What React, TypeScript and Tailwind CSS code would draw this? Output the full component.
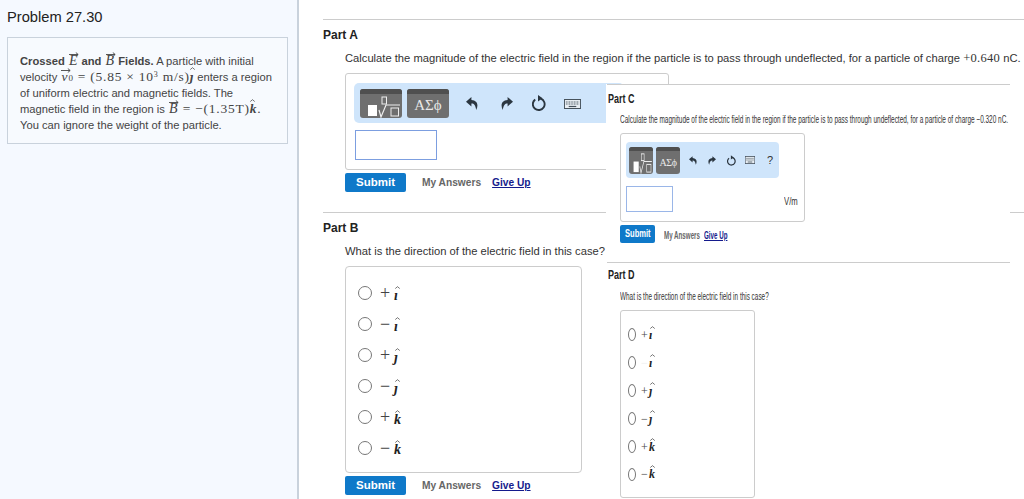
const SANS = { fontFamily: '"Liberation Sans", Arial, sans-serif' };

function UndoIcon({ className }: { className?: string }) {
  return (
    <svg viewBox="0 0 12 13" className={className} fill="#2b3640">
      <path d="M5.400 0 0 4.800l5.400 4.600V6.400c2.600-.1 4 1.400 4.800 6.600 2.400-4.800 1.500-9.600-4.800-10.100z" />
    </svg>
  );
}

function RedoIcon({ className }: { className?: string }) {
  return (
    <svg viewBox="0 0 12 13" className={className} fill="#2b3640">
      <path d="M6.600 0 12 4.800 6.600 9.400V6.400C4 6.300 2.600 7.800 1.800 13-.6 8.200.3 3.400 6.600 2.900z" />
    </svg>
  );
}

function ResetIcon({ className }: { className?: string }) {
  return (
    <svg viewBox="0 0 14 16" className={className} fill="none" stroke="#2b3640" strokeWidth="1.900">
      <path d="M8.800 3.600A5.900 5.900 0 1 1 3.200 4.400" />
      <path d="M6 0l4.600 3.300L6 6.400z" fill="#2b3640" stroke="none" />
    </svg>
  );
}

function KeyboardIcon({ className }: { className?: string }) {
  return (
    <svg viewBox="0 0 18 10" preserveAspectRatio="none" className={className} fill="none">
      <rect x=".5" y=".5" width="17" height="9" fill="#e8eef3" stroke="#46525c" />
      <path d="M2 3h14M2 5h14" stroke="#46525c" strokeWidth="1.200" strokeDasharray="1 .7" />
      <path d="M5 7.500h8" stroke="#46525c" strokeWidth="1.200" />
    </svg>
  );
}

function TemplateButton({ small }: { small?: boolean }) {
  return (
    <div className={`flex flex-col overflow-hidden rounded-[3px] bg-[#6f6f6f] ${small ? 'h-[27px] w-6' : 'h-[29px] w-[42px]'}`}>
      <div className={`shrink-0 bg-[#4f4f4f] ${small ? 'h-[4px]' : 'h-[5px]'}`} />
      <svg viewBox="0 0 42 24" preserveAspectRatio="none" className="min-h-0 flex-1">
        <rect x="8" y="11" width="9" height="11" fill="#fff" />
        <rect x="22" y="3" width="4.500" height="7" fill="none" stroke="#eee" />
        <path d="M19 16l2 7 5-12h14" fill="none" stroke="#eee" strokeWidth="1.200" />
        <rect x="31" y="14" width="7.500" height="8" fill="none" stroke="#eee" />
      </svg>
    </div>
  );
}

function GreekButton({ small }: { small?: boolean }) {
  return (
    <div className={`flex flex-col overflow-hidden rounded-[3px] bg-[#6f6f6f] ${small ? 'h-[27px] w-6' : 'h-[29px] w-[42px]'}`}>
      <div className={`shrink-0 bg-[#4f4f4f] ${small ? 'h-[4px]' : 'h-[5px]'}`} />
      <div className={`flex flex-1 items-center justify-center font-['Liberation_Serif',serif] text-[#e8e8e8] ${small ? 'text-[10px] tracking-[-0.5px]' : 'text-[15px]'}`}>
        AΣϕ
      </div>
    </div>
  );
}

/* letter with a vector arrow above it */
function Vec({ children }: { children: string }) {
  return (
    <span className="relative inline-block font-['Liberation_Serif',serif] italic">
      {children}
      <svg viewBox="0 0 10 5" className="absolute left-0 top-[-2px] h-[5px] w-[10px]" fill="none" stroke="#444" strokeWidth="0.900">
        <path d="M0 2.500h9M6.800.5 9.200 2.500 6.800 4.500" />
      </svg>
    </span>
  );
}

/* unit vector letter with a hat above it */
function Hat({ children }: { children: string }) {
  return (
    <span className="relative inline-block font-['Liberation_Serif',serif] font-bold italic">
      {children}
      <svg viewBox="0 0 6 3" className="absolute left-[0.5px] top-[-3px] h-[3px] w-[5px]" fill="none" stroke="#333" strokeWidth="0.800">
        <path d="M.3 2.800 3 .5l2.700 2.300" />
      </svg>
    </span>
  );
}

function Actions() {
  return (
    <div className="flex items-center">
      <button className="h-[19px] w-[61px] rounded-[2px] bg-[#0f79c9] text-[11.500px] font-bold text-white">Submit</button>
      <span className="ml-4 text-[10.200px] font-bold text-[#666]">My Answers</span>
      <span className="ml-[11px] text-[10.200px] font-bold text-[#141a8c] underline">Give Up</span>
    </div>
  );
}

const CHOICES = [
  ['+', 'ı'],
  ['−', 'ı'],
  ['+', 'ȷ'],
  ['−', 'ȷ'],
  ['+', 'k'],
  ['−', 'k'],
];

function Radio({ sign, unit }: { sign: string; unit: string }) {
  return (
    <div className="flex h-[30.900px] items-center">
      <span className="h-[14px] w-[14px] rounded-full border border-[#777] bg-white" />
      <span className="ml-2 w-[14px] font-['Liberation_Serif',serif] text-[18px] leading-none text-[#444]">{sign}</span>
      <span className="mt-1 text-[14px] leading-none text-[#222]">
        <Hat>{unit}</Hat>
      </span>
    </div>
  );
}

function SmallRadio({ sign, unit, faint }: { sign: string; unit: string; faint?: boolean }) {
  return (
    <div className="flex h-[27.900px] items-center">
      <span className="h-[13px] w-[8px] rounded-[50%] border border-[#777] bg-white" />
      <span className={`ml-[5px] w-[8px] font-['Liberation_Serif',serif] text-[12px] leading-none ${faint ? 'text-[#eee]' : 'text-[#444]'}`}>{sign}</span>
      <span className="text-[12px] leading-none text-[#222]">
        <Hat>{unit}</Hat>
      </span>
    </div>
  );
}

/* Part C and D pasted over the right side, squeezed horizontally */
function Overlay() {
  return (
    <div className="absolute left-[606px] top-[84px] h-[415px] w-[404px] bg-white text-[#333]">
      <div className="ml-px h-px bg-[#ccc]" />
      <div className="ml-[2px] mt-[7px] h-[14px] origin-left scale-x-[0.75] text-[12px] font-bold leading-[14px] text-[#222]">Part C</div>
      <div className="ml-[14px] mt-[8px] h-3 w-[620px] origin-left scale-x-[0.645] whitespace-nowrap text-[10px] leading-3">
        Calculate the magnitude of the electric field in the region if the particle is to pass through undeflected, for a particle of charge −0.320 nC.
      </div>
      <div className="ml-[14px] mt-[7px] h-[89px] w-[185px] rounded-[3px] border border-[#ccc] px-[5px] pt-2">
        <div className="flex h-9 w-[153px] items-center gap-[3px] rounded-[4px] bg-[#cfe5fb] pl-[3px]">
          <TemplateButton small />
          <GreekButton small />
          <UndoIcon className="ml-[6px] h-[11px] w-[8px]" />
          <RedoIcon className="ml-2 h-[11px] w-[8px]" />
          <ResetIcon className="ml-2 h-[13px] w-[9px]" />
          <KeyboardIcon className="ml-[6px] h-2 w-[10px]" />
          <span className="ml-[9px] text-[11px] leading-none">?</span>
        </div>
        <div className="mt-2 flex items-center">
          <div className="h-[26px] w-[47px] shrink-0 border border-[#9ab6e8]" />
          <span className="ml-[111px] mt-1 shrink-0 origin-left scale-x-[0.7] whitespace-nowrap text-[11px]">V/m</span>
        </div>
      </div>
      <div className="ml-[14px] mt-[3px] flex h-[18px] items-center">
        <div className="flex h-[18px] w-[35px] items-center justify-center rounded-[2px] bg-[#0f79c9]">
          <span className="scale-x-[0.72] text-[10.500px] font-bold text-white">Submit</span>
        </div>
        <div className="ml-[9px] w-[34px]">
          <span className="inline-block origin-left scale-x-[0.62] whitespace-nowrap text-[10px] font-bold text-[#666]">My Answers</span>
        </div>
        <div className="ml-[6px] w-[22px]">
          <span className="inline-block origin-left scale-x-[0.62] whitespace-nowrap text-[10px] font-bold text-[#141a8c] underline">Give Up</span>
        </div>
      </div>
      <div className="ml-px mt-[19px] h-px bg-[#ccc]" />
      <div className="ml-[2px] mt-[5px] h-[14px] origin-left scale-x-[0.75] text-[12px] font-bold leading-[14px] text-[#222]">Part D</div>
      <div className="ml-[14px] mt-[9px] h-3 w-[300px] origin-left scale-x-[0.64] whitespace-nowrap text-[10px] leading-3">
        What is the direction of the electric field in this case?
      </div>
      <div className="ml-[14px] mt-[7px] h-[188px] w-[135px] rounded-[3px] border border-[#ccc] pl-[7px] pt-[10px]">
        {CHOICES.map(([sign, unit], i) => (
          <SmallRadio key={i} sign={sign} unit={unit} faint={i === 1} />
        ))}
      </div>
    </div>
  );
}

export default function App() {
  return (
    <div style={SANS} className="relative flex h-[499px] w-[1024px] overflow-hidden bg-white text-[#333]">
      <aside className="h-full w-[299px] shrink-0 border-r-2 border-[#c9d2dc] bg-[#f5f9ff] pl-[7px]">
        <h1 className="pt-[8px] text-[14.700px] leading-[18px] text-[#222]">Problem 27.30</h1>
        <div className="mt-[11px] h-[107px] w-[281px] border border-[#c9d2dc] bg-[#f7fafe] pl-3 pt-[15px] text-[11.200px] leading-[16px] text-[#444]">
          <p className="whitespace-nowrap">
            <b>Crossed</b> <span className="mx-[1px] text-[14px] leading-none"><Vec>E</Vec></span> <b>and</b> <span className="mx-[1px] text-[14px] leading-none"><Vec>B</Vec></span> <b>Fields.</b> A particle with initial
          </p>
          <p className="whitespace-nowrap">
            velocity <span className="ml-[1px] text-[13.500px] leading-none"><Vec>v</Vec></span>
            <span className="ml-[1px] font-['Liberation_Serif',serif] text-[13.500px] leading-none tracking-[0.75px]">
              <span className="text-[9px]">0</span> = (5.85 × 10<sup className="text-[8px]">3</sup> m/s)<Hat>ȷ</Hat>
            </span>{' '}
            enters a region
          </p>
          <p className="whitespace-nowrap">of uniform electric and magnetic fields. The</p>
          <p className="whitespace-nowrap">
            magnetic field in the region is{' '}
            <span className="ml-[1px] text-[14px] leading-none"><Vec>B</Vec></span>
            <span className="ml-[1px] font-['Liberation_Serif',serif] text-[13.500px] leading-none tracking-[0.75px]">
              {' '}= −(1.35T)<Hat>k</Hat>.
            </span>
          </p>
          <p className="whitespace-nowrap">You can ignore the weight of the particle.</p>
        </div>
      </aside>

      <main className="min-w-0 flex-1 pl-6 pt-[19px]">
        <div className="h-px bg-[#ccc]" />
        <h2 className="mt-2 text-[12px] font-bold leading-[14px] text-[#222]">Part A</h2>
        <div className="ml-[22px]">
          <p className="mt-[9px] whitespace-nowrap text-[11.200px] leading-[14px]">
            Calculate the magnitude of the electric field in the region if the particle is to pass through undeflected, for a particle of charge{' '}
            <span className="font-['Liberation_Serif',serif] text-[12.500px] tracking-[0.3px]">+0.640</span> nC.
          </p>
          <div className="mt-2 h-[97px] w-[324px] rounded-[3px] border border-[#ccc] px-2 pt-[9px]">
            <div className="flex h-10 w-[270px] items-center gap-[5px] rounded-[5px] bg-[#cfe5fb] pl-[6px]">
              <TemplateButton />
              <GreekButton />
              <UndoIcon className="ml-3 h-[13px] w-3" />
              <RedoIcon className="ml-[18px] h-[13px] w-3" />
              <ResetIcon className="ml-[14px] h-4 w-[14px]" />
              <KeyboardIcon className="ml-[13px] mt-[2px] h-[10px] w-[17px]" />
            </div>
            <div className="ml-px mt-[7px] h-[30px] w-[82px] border border-[#7c9ee0]" />
          </div>
          <div className="mt-[3px]">
            <Actions />
          </div>
        </div>

        <div className="mt-5 h-px bg-[#ccc]" />
        <h2 className="mt-2 text-[12px] font-bold leading-[14px] text-[#222]">Part B</h2>
        <div className="ml-[22px]">
          <p className="mt-[9px] whitespace-nowrap text-[11.200px] leading-[14px]">What is the direction of the electric field in this case?</p>
          <div className="mt-2 h-[207px] w-[237px] rounded-[4px] border border-[#ccc] pl-[12px] pt-[11px]">
            {CHOICES.map(([sign, unit], i) => (
              <Radio key={i} sign={sign} unit={unit} />
            ))}
          </div>
          <div className="mt-[3px]">
            <Actions />
          </div>
        </div>
      </main>

      <Overlay />
    </div>
  );
}
